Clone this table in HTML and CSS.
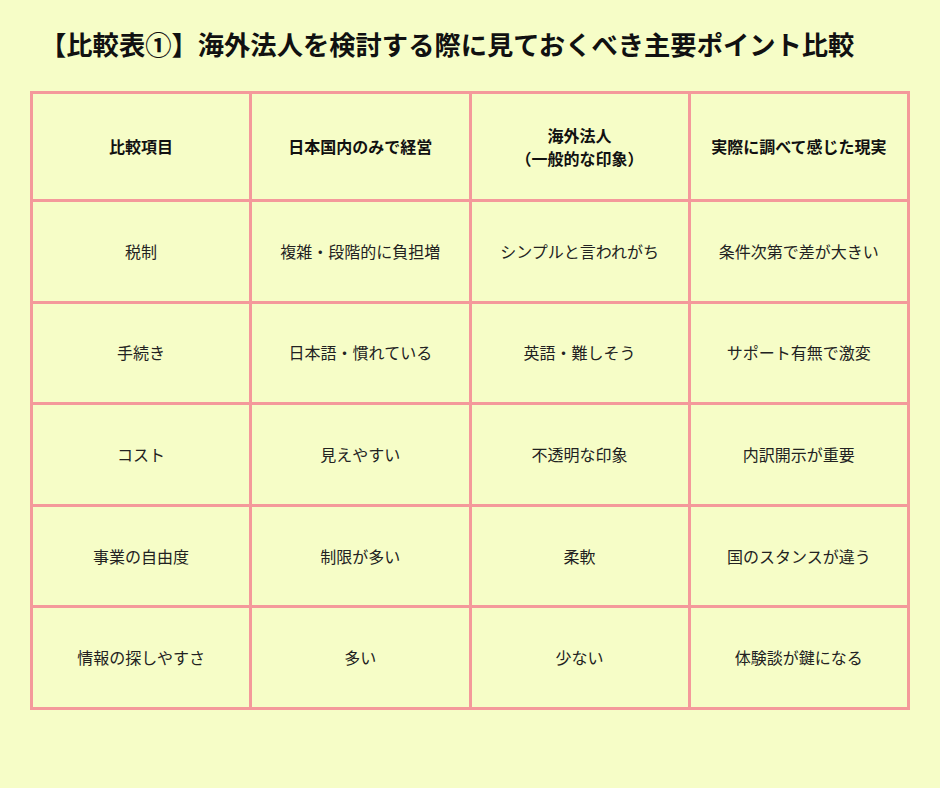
FILE: index.html
```html
<!DOCTYPE html>
<html lang="ja">
<head>
<meta charset="utf-8">
<link rel="stylesheet" href="styles.css">
</head>
<body>
<div class="page">
  <h1 class="title">【比較表①】海外法人を検討する際に見ておくべき主要ポイント比較</h1>
  <div class="table">
    <div class="cell head">比較項目</div>
    <div class="cell head">日本国内のみで経営</div>
    <div class="cell head">海外法人<br>（一般的な印象）</div>
    <div class="cell head">実際に調べて感じた現実</div>

    <div class="cell">税制</div>
    <div class="cell">複雑・段階的に負担増</div>
    <div class="cell">シンプルと言われがち</div>
    <div class="cell">条件次第で差が大きい</div>

    <div class="cell">手続き</div>
    <div class="cell">日本語・慣れている</div>
    <div class="cell">英語・難しそう</div>
    <div class="cell">サポート有無で激変</div>

    <div class="cell">コスト</div>
    <div class="cell">見えやすい</div>
    <div class="cell">不透明な印象</div>
    <div class="cell">内訳開示が重要</div>

    <div class="cell">事業の自由度</div>
    <div class="cell">制限が多い</div>
    <div class="cell">柔軟</div>
    <div class="cell">国のスタンスが違う</div>

    <div class="cell">情報の探しやすさ</div>
    <div class="cell">多い</div>
    <div class="cell">少ない</div>
    <div class="cell">体験談が鍵になる</div>
  </div>
</div>
</body>
</html>
```

FILE: styles.css
```css
html, body {
  margin: 0;
  padding: 0;
  background: #f6fdc7;
}
.page {
  width: 940px;
  height: 788px;
  box-sizing: border-box;
  padding: 26px 30px 0 30px;
  font-family: "Noto Sans CJK JP", "Noto Sans", sans-serif;
  color: #222;
}
.title {
  margin: 0 0 29px 0;
  padding-left: 10px;
  font-size: 26.3px;
  line-height: 36px;
  font-weight: 700;
  color: #111;
}
.table {
  width: 880px;
  box-sizing: border-box;
  display: grid;
  grid-template-columns: repeat(4, 1fr);
  grid-template-rows: 105px repeat(5, 98.6px);
  gap: 3px;
  padding: 3px;
  background: #f4999b;
}
.cell {
  background: #f6fdc7;
  display: flex;
  align-items: center;
  justify-content: center;
  text-align: center;
  font-size: 16px;
  line-height: 23px;
  color: #222;
}
.head {
  font-weight: 700;
  color: #111;
}
```
